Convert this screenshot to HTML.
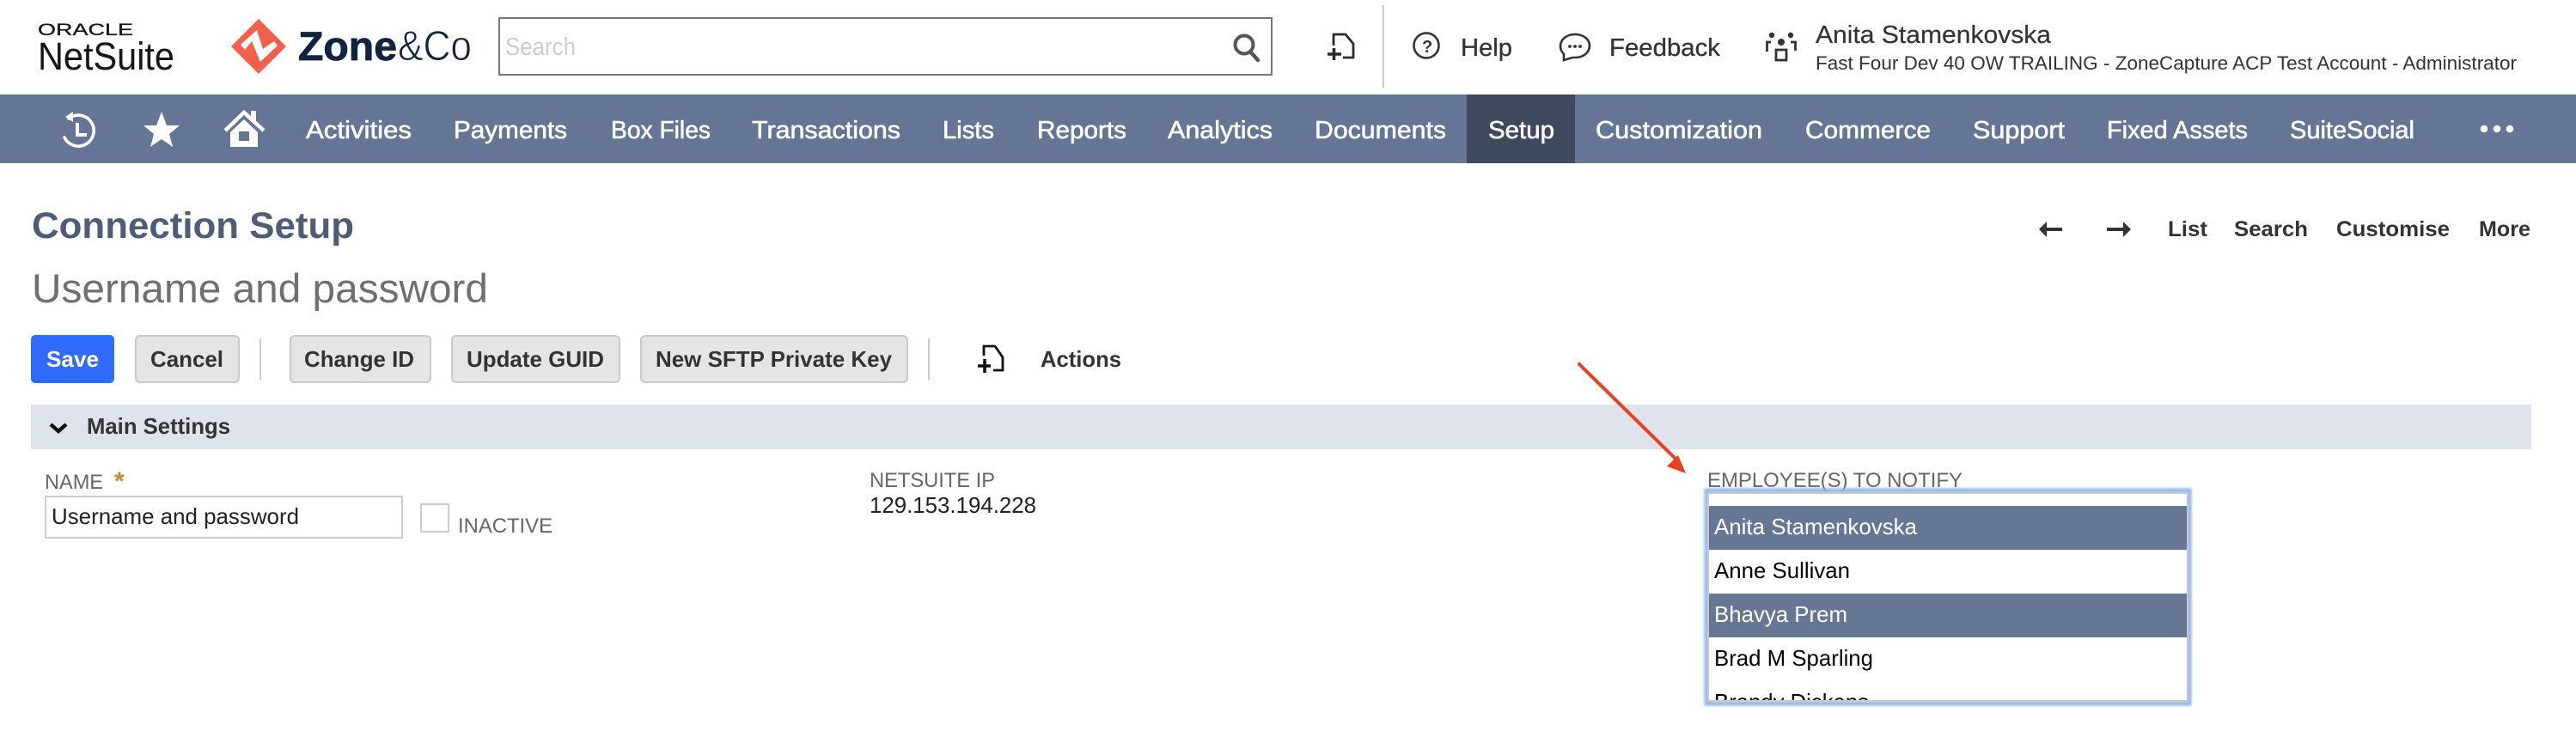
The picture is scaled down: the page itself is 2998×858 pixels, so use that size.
<!DOCTYPE html>
<html lang="en">
<head>
<meta charset="utf-8">
<title>Connection Setup</title>
<style>
html,body{margin:0;padding:0;background:#fff;width:2998px;height:858px;overflow:hidden}
svg{display:block}
text{font-family:"Liberation Sans",Arial,sans-serif;white-space:pre}
.nav{font-size:29px;fill:#fff;stroke:#fff;stroke-width:.6px}
.top{font-size:29px;fill:#333;stroke:#333;stroke-width:.3px}
.act{font-size:25px;font-weight:700;fill:#333}
.btn{font-size:26px;font-weight:700;fill:#333}
.lab{font-size:24px;fill:#666}
.val{font-size:26px;fill:#222}
.opt{font-size:26px;fill:#000}
.sel{font-size:26px;fill:#fff}
</style>
</head>
<body>
<svg width="2998" height="858" viewBox="0 0 2998 858" xmlns="http://www.w3.org/2000/svg">
<defs>
<clipPath id="lb"><rect x="1989" y="575" width="556" height="240"/></clipPath>
<filter id="gl" x="-5%" y="-5%" width="110%" height="110%"><feGaussianBlur stdDeviation="1.5"/></filter>
</defs>
<rect width="2998" height="858" fill="#fff"/>

<!-- Oracle NetSuite logo -->
<text x="44" y="41" font-size="19.5" fill="#161616" stroke="#161616" stroke-width=".3" textLength="111" lengthAdjust="spacingAndGlyphs">ORACLE</text>
<text x="44" y="81" font-size="45" fill="#161616" textLength="159" lengthAdjust="spacingAndGlyphs">NetSuite</text>

<!-- Zone&Co logo -->
<polygon points="301,22 333,54 301,86 269,54" fill="#f0604c"/>
<polygon points="280,52 299,35 306,57 319,48 323,53 303,72 293,48 285,58" fill="#fff"/>
<text x="347" y="70" font-size="47" font-weight="700" fill="#12233f" stroke="#12233f" stroke-width=".8" textLength="115" lengthAdjust="spacingAndGlyphs">Zone</text>
<text x="463" y="70" font-size="49" fill="#12233f" stroke="#fff" stroke-width=".9" textLength="86" lengthAdjust="spacingAndGlyphs">&amp;Co</text>

<!-- Search box -->
<rect x="581" y="21" width="899" height="66" fill="#fff" stroke="#777" stroke-width="2"/>
<text x="588" y="64" font-size="29" fill="#ccc" textLength="82" lengthAdjust="spacingAndGlyphs">Search</text>
<circle cx="1448" cy="52" r="10.5" fill="none" stroke="#555" stroke-width="4"/>
<line x1="1455" y1="60" x2="1464" y2="70" stroke="#555" stroke-width="4.5" stroke-linecap="round"/>

<!-- Add icon -->
<path d="M1552 53V40H1566L1575 51V67H1563" fill="none" stroke="#2b2b2b" stroke-width="2.8"/>
<path d="M1552.500 56V70M1545 63H1561" fill="none" stroke="#2b2b2b" stroke-width="3.6"/>
<rect x="1609" y="6" width="2" height="96" fill="#ccc"/>

<!-- Help -->
<circle cx="1660" cy="53" r="14.500" fill="none" stroke="#333" stroke-width="2.6"/>
<text x="1655" y="61" font-size="20" font-weight="700" fill="#333">?</text>
<text class="top" x="1700" y="65" textLength="60" lengthAdjust="spacingAndGlyphs">Help</text>

<!-- Feedback -->
<path d="M1833 40C1823 40 1816 46 1816 54C1816 58 1818 61 1820 63L1820 70L1830 67C1831 67 1832 67 1833 67C1843 67 1850 61 1850 53C1850 46 1843 40 1833 40Z" fill="none" stroke="#333" stroke-width="2.6"/>
<circle cx="1827" cy="54" r="1.9" fill="#333"/><circle cx="1833" cy="54" r="1.9" fill="#333"/><circle cx="1839" cy="54" r="1.9" fill="#333"/>
<text class="top" x="1873" y="65" textLength="129" lengthAdjust="spacingAndGlyphs">Feedback</text>

<!-- Role icon -->
<circle cx="2062" cy="41" r="3.2" fill="#333"/><circle cx="2084" cy="41" r="3.2" fill="#333"/><circle cx="2073" cy="49" r="4" fill="#333"/>
<rect x="2067" y="58" width="12" height="12" fill="none" stroke="#333" stroke-width="2.8"/>
<path d="M2061 49H2056.500V60M2084 49H2089.500V59" fill="none" stroke="#333" stroke-width="2.8"/>

<text class="top" x="2113" y="50" textLength="274" lengthAdjust="spacingAndGlyphs" style="stroke-width:.2px">Anita Stamenkovska</text>
<text x="2113" y="81" font-size="22.5" fill="#333" textLength="816" lengthAdjust="spacingAndGlyphs">Fast Four Dev 40 OW TRAILING - ZoneCapture ACP Test Account - Administrator</text>

<!-- Nav bar -->
<rect x="0" y="110" width="2998" height="80" fill="#657596"/>
<rect x="1707" y="110" width="126" height="80" fill="#3d495c"/>

<!-- history -->
<path d="M80 138A18 18 0 1 1 75 160" fill="none" stroke="#fff" stroke-width="3.6" stroke-linecap="round"/>
<polygon points="85,130 85,142 76,136" fill="#fff"/>
<path d="M90 143V157H101" fill="none" stroke="#fff" stroke-width="4"/>
<!-- star -->
<polygon points="188,130 194,146 209,146 197,156 201,171 188,162 175,171 179,156 167,146 182,146" fill="#fff"/>
<!-- home -->
<path d="M262 152L284 131L307 152" fill="none" stroke="#fff" stroke-width="4.5"/>
<rect x="292" y="129" width="6" height="13" fill="#fff"/>
<path fill-rule="evenodd" d="M284 139L300 154V171H268V154ZM278 153V164H290V153Z" fill="#fff"/>

<text class="nav" x="356" y="161" textLength="123" lengthAdjust="spacingAndGlyphs">Activities</text>
<text class="nav" x="528" y="161" textLength="132" lengthAdjust="spacingAndGlyphs">Payments</text>
<text class="nav" x="711" y="161" textLength="116" lengthAdjust="spacingAndGlyphs">Box Files</text>
<text class="nav" x="875" y="161" textLength="173" lengthAdjust="spacingAndGlyphs">Transactions</text>
<text class="nav" x="1097" y="161" textLength="60" lengthAdjust="spacingAndGlyphs">Lists</text>
<text class="nav" x="1207" y="161" textLength="104" lengthAdjust="spacingAndGlyphs">Reports</text>
<text class="nav" x="1359" y="161" textLength="122" lengthAdjust="spacingAndGlyphs">Analytics</text>
<text class="nav" x="1530" y="161" textLength="153" lengthAdjust="spacingAndGlyphs">Documents</text>
<text class="nav" x="1732" y="161" textLength="77" lengthAdjust="spacingAndGlyphs">Setup</text>
<text class="nav" x="1857" y="161" textLength="194" lengthAdjust="spacingAndGlyphs">Customization</text>
<text class="nav" x="2101" y="161" textLength="146" lengthAdjust="spacingAndGlyphs">Commerce</text>
<text class="nav" x="2296" y="161" textLength="107" lengthAdjust="spacingAndGlyphs">Support</text>
<text class="nav" x="2452" y="161" textLength="164" lengthAdjust="spacingAndGlyphs">Fixed Assets</text>
<text class="nav" x="2665" y="161" textLength="145" lengthAdjust="spacingAndGlyphs">SuiteSocial</text>
<circle cx="2891" cy="150" r="4.3" fill="#fff"/><circle cx="2906" cy="150" r="4.3" fill="#fff"/><circle cx="2921" cy="150" r="4.3" fill="#fff"/>

<!-- Titles -->
<text x="37" y="277" font-size="43" font-weight="700" fill="#4d5d78" textLength="375" lengthAdjust="spacingAndGlyphs">Connection Setup</text>
<text x="37" y="352" font-size="47" fill="#6f6f6f" textLength="531" lengthAdjust="spacingAndGlyphs">Username and password</text>

<!-- Right actions -->
<path d="M2400 267H2380" stroke="#333" stroke-width="4"/><polygon points="2373,267 2382,258 2382,276" fill="#333"/>
<path d="M2452 267H2473" stroke="#333" stroke-width="4"/><polygon points="2480,267 2471,258 2471,276" fill="#333"/>
<text class="act" x="2523" y="275" textLength="46" lengthAdjust="spacingAndGlyphs">List</text>
<text class="act" x="2600" y="275" textLength="86" lengthAdjust="spacingAndGlyphs">Search</text>
<text class="act" x="2719" y="275" textLength="132" lengthAdjust="spacingAndGlyphs">Customise</text>
<text class="act" x="2885" y="275" textLength="60" lengthAdjust="spacingAndGlyphs">More</text>

<!-- Buttons -->
<rect x="36" y="390" width="97" height="56" rx="5" fill="#2f6bff"/>
<text class="btn" x="54" y="427" style="fill:#fff" textLength="61" lengthAdjust="spacingAndGlyphs">Save</text>
<g fill="#e5e5e5" stroke="#c8c8c8" stroke-width="2">
<rect x="158" y="391" width="120" height="54" rx="5"/>
<rect x="338" y="391" width="163" height="54" rx="5"/>
<rect x="526" y="391" width="195" height="54" rx="5"/>
<rect x="746" y="391" width="310" height="54" rx="5"/>
</g>
<text class="btn" x="175" y="427" textLength="85" lengthAdjust="spacingAndGlyphs">Cancel</text>
<text class="btn" x="354" y="427" textLength="128" lengthAdjust="spacingAndGlyphs">Change ID</text>
<text class="btn" x="543" y="427" textLength="160" lengthAdjust="spacingAndGlyphs">Update GUID</text>
<text class="btn" x="763" y="427" textLength="275" lengthAdjust="spacingAndGlyphs">New SFTP Private Key</text>
<rect x="302" y="394" width="2" height="48" fill="#ccc"/>
<rect x="1080" y="394" width="2" height="48" fill="#ccc"/>
<path d="M1145 414V403H1158L1167 416V431H1156" fill="none" stroke="#111" stroke-width="2.8"/>
<path d="M1146 418V434M1138 426H1153" fill="none" stroke="#111" stroke-width="3.6"/>
<text class="btn" x="1211" y="427" textLength="94" lengthAdjust="spacingAndGlyphs">Actions</text>

<!-- Section bar -->
<rect x="36" y="471" width="2910" height="52" fill="#dfe3eb"/>
<path d="M59 494L68 502L77 494" fill="none" stroke="#111" stroke-width="4.4"/>
<text class="btn" x="101" y="505" textLength="167" lengthAdjust="spacingAndGlyphs">Main Settings</text>

<!-- Name field -->
<text class="lab" x="52" y="569" textLength="68" lengthAdjust="spacingAndGlyphs">NAME</text>
<text x="133" y="570" font-size="30" font-weight="700" fill="#c6882e">*</text>
<rect x="53" y="578" width="415" height="48" fill="#fff" stroke="#ccc" stroke-width="2"/>
<text class="val" x="60" y="610" textLength="288" lengthAdjust="spacingAndGlyphs">Username and password</text>
<rect x="490" y="587" width="32" height="32" fill="#fff" stroke="#ccc" stroke-width="2"/>
<text class="lab" x="533" y="620" textLength="110" lengthAdjust="spacingAndGlyphs">INACTIVE</text>

<!-- NetSuite IP -->
<text class="lab" x="1012" y="567" textLength="146" lengthAdjust="spacingAndGlyphs">NETSUITE IP</text>
<text class="val" x="1012" y="597" textLength="194" lengthAdjust="spacingAndGlyphs">129.153.194.228</text>

<!-- Employees -->
<text class="lab" x="1987" y="567" textLength="297" lengthAdjust="spacingAndGlyphs">EMPLOYEE(S) TO NOTIFY</text>
<rect x="1986" y="571" width="562" height="248" fill="none" stroke="#8fb3e6" stroke-width="5" filter="url(#gl)"/>
<rect x="1988" y="574" width="558" height="242" fill="#fff" stroke="#c8c8c8" stroke-width="2"/>
<g clip-path="url(#lb)">
<rect x="1989" y="589" width="556" height="51" fill="#667695"/>
<rect x="1989" y="691" width="556" height="51" fill="#667695"/>
<text class="sel" x="1995" y="622" textLength="236" lengthAdjust="spacingAndGlyphs">Anita Stamenkovska</text>
<text class="opt" x="1995" y="673" textLength="158" lengthAdjust="spacingAndGlyphs">Anne Sullivan</text>
<text class="sel" x="1995" y="724" textLength="155" lengthAdjust="spacingAndGlyphs">Bhavya Prem</text>
<text class="opt" x="1995" y="775" textLength="185" lengthAdjust="spacingAndGlyphs">Brad M Sparling</text>
<text class="opt" x="1995" y="826" textLength="180" lengthAdjust="spacingAndGlyphs">Brandy Dickens</text>
</g>

<!-- Annotation arrow -->
<line x1="1838" y1="424" x2="1951" y2="535" stroke="#ea3f24" stroke-width="4" stroke-linecap="round"/>
<polygon points="1962,551 1940,543 1953,530" fill="#ea3f24"/>
</svg>
</body>
</html>
